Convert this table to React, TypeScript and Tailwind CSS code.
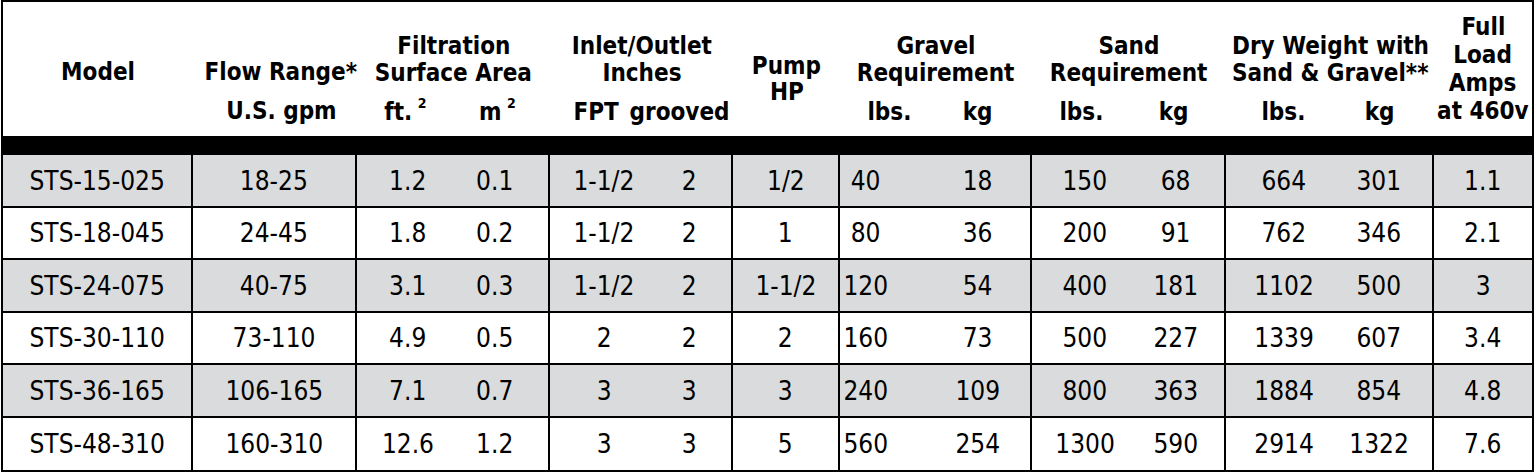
import React from 'react';

const rows: string[][] = [
    ['STS-15-025', '18-25', '1.2', '0.1', '1-1/2', '2', '1/2', '40', '18', '150', '68', '664', '301', '1.1'],
    ['STS-18-045', '24-45', '1.8', '0.2', '1-1/2', '2', '1', '80', '36', '200', '91', '762', '346', '2.1'],
    ['STS-24-075', '40-75', '3.1', '0.3', '1-1/2', '2', '1-1/2', '120', '54', '400', '181', '1102', '500', '3'],
    ['STS-30-110', '73-110', '4.9', '0.5', '2', '2', '2', '160', '73', '500', '227', '1339', '607', '3.4'],
    ['STS-36-165', '106-165', '7.1', '0.7', '3', '3', '3', '240', '109', '800', '363', '1884', '854', '4.8'],
    ['STS-48-310', '160-310', '12.6', '1.2', '3', '3', '5', '560', '254', '1300', '590', '2914', '1322', '7.6'],
];

const cols = 'grid grid-cols-[190px_164px_193px_183px_107px_192px_194px_208px_98px]';

// header text is squeezed like the source pdf
function H({children}: {children: React.ReactNode}) {
    return <span className="inline-block scale-x-[0.9] whitespace-nowrap">{children}</span>;
}

function T({children}: {children: React.ReactNode}) {
    return <span className="inline-block scale-x-[0.9] whitespace-nowrap">{children}</span>;
}

function Sq() {
    return <sup className="-top-[12px] ml-[6px] text-[14px]">2</sup>;
}

// two values in one group: first track centres a, third track centres b
function Pair({grid, a, b}: {grid: string; a: React.ReactNode; b: React.ReactNode}) {
    return (
        <div className={`${grid} w-full items-center`}>
            <div className="flex justify-center">{a}</div>
            <div className="col-start-3 flex justify-center">{b}</div>
        </div>
    );
}

function Header() {
    return (
        <div className={`${cols} h-[134px] text-[24px] font-bold leading-[27px]`}>
            <div className="flex flex-col items-center pt-[57px]">
                <H>Model</H>
            </div>
            <div className="flex flex-col items-center pt-[57px] pl-[12px]">
                <H>Flow Range*</H>
                <div className="mt-[12px]"><H>U.S. gpm</H></div>
            </div>
            <div className="flex flex-col items-center pt-[31px]">
                <H>Filtration</H>
                <H>Surface Area</H>
                <div className="mt-[12px] w-full">
                    <Pair grid="grid grid-cols-[96px_24px_40px_1fr]" a={<H>ft.<Sq/></H>} b={<H>m<Sq/></H>}/>
                </div>
            </div>
            <div className="flex flex-col items-center pt-[31px]">
                <H>Inlet/Outlet</H>
                <H>Inches</H>
                <div className="mt-[12px] w-full">
                    <Pair grid="grid grid-cols-[92px_18px_40px_1fr]" a={<H>FPT</H>} b={<H>grooved</H>}/>
                </div>
            </div>
            <div className="flex flex-col items-center pt-[51px] leading-[26px]">
                <H>Pump</H>
                <H>HP</H>
            </div>
            <div className="flex flex-col items-center pt-[31px]">
                <H>Gravel</H>
                <H>Requirement</H>
                <div className="mt-[12px] w-full">
                    <Pair grid="grid grid-cols-[98px_20px_40px_1fr]" a={<H>lbs.</H>} b={<H>kg</H>}/>
                </div>
            </div>
            <div className="flex flex-col items-center pt-[31px]">
                <H>Sand</H>
                <H>Requirement</H>
                <div className="mt-[12px] w-full">
                    <Pair grid="grid grid-cols-[98px_24px_40px_1fr]" a={<H>lbs.</H>} b={<H>kg</H>}/>
                </div>
            </div>
            <div className="flex flex-col items-center pt-[31px]">
                <H>Dry Weight with</H>
                <H>Sand &amp; Gravel**</H>
                <div className="mt-[12px] w-full">
                    <Pair grid="grid grid-cols-[114px_20px_40px_1fr]" a={<H>lbs.</H>} b={<H>kg</H>}/>
                </div>
            </div>
            <div className="flex flex-col items-center pt-[11px] leading-[28px]">
                <H>Full</H>
                <H>Load</H>
                <H>Amps</H>
                <H>at 460v</H>
            </div>
        </div>
    );
}

function Row({r, i}: {r: string[]; i: number}) {
    const bg = i % 2 === 0 ? 'bg-[#dadbdc]' : 'bg-white';
    const h = i % 2 === 0 ? 'h-[53px]' : 'h-[52px]';
    const line = i < rows.length - 1 ? 'border-b-2 border-black' : '';
    const cell = 'flex items-center justify-center border-r-2 border-black';
    return (
        <div className={`${cols} ${bg} ${h} ${line}`}>
            <div className={cell}><T>{r[0]}</T></div>
            <div className={cell}><T>{r[1]}</T></div>
            <div className={cell}>
                <Pair grid="grid grid-cols-[102px_16px_40px_1fr]" a={<T>{r[2]}</T>} b={<T>{r[3]}</T>}/>
            </div>
            <div className={cell}>
                <Pair grid="grid grid-cols-[108px_11px_40px_1fr]" a={<T>{r[4]}</T>} b={<T>{r[5]}</T>}/>
            </div>
            <div className={cell}><T>{r[6]}</T></div>
            <div className={cell}>
                <Pair grid="grid grid-cols-[52px_66px_40px_1fr]" a={<T>{r[7]}</T>} b={<T>{r[8]}</T>}/>
            </div>
            <div className={cell}>
                <Pair grid="grid grid-cols-[106px_18px_40px_1fr]" a={<T>{r[9]}</T>} b={<T>{r[10]}</T>}/>
            </div>
            <div className={cell}>
                <Pair grid="grid grid-cols-[116px_17px_40px_1fr]" a={<T>{r[11]}</T>} b={<T>{r[12]}</T>}/>
            </div>
            <div className="flex items-center justify-center"><T>{r[13]}</T></div>
        </div>
    );
}

export default function App() {
    return (
        <div className="min-h-[475px] bg-white">
            <div className="ml-[1px] w-[1533px] border-2 border-black bg-white text-black font-['DejaVu_Sans',sans-serif]">
                <Header/>
                <div className="h-[19px] bg-black"/>
                <div className="text-[26px] leading-none">
                    {rows.map((r, i) => <Row key={r[0]} r={r} i={i}/>)}
                </div>
            </div>
        </div>
    );
}
